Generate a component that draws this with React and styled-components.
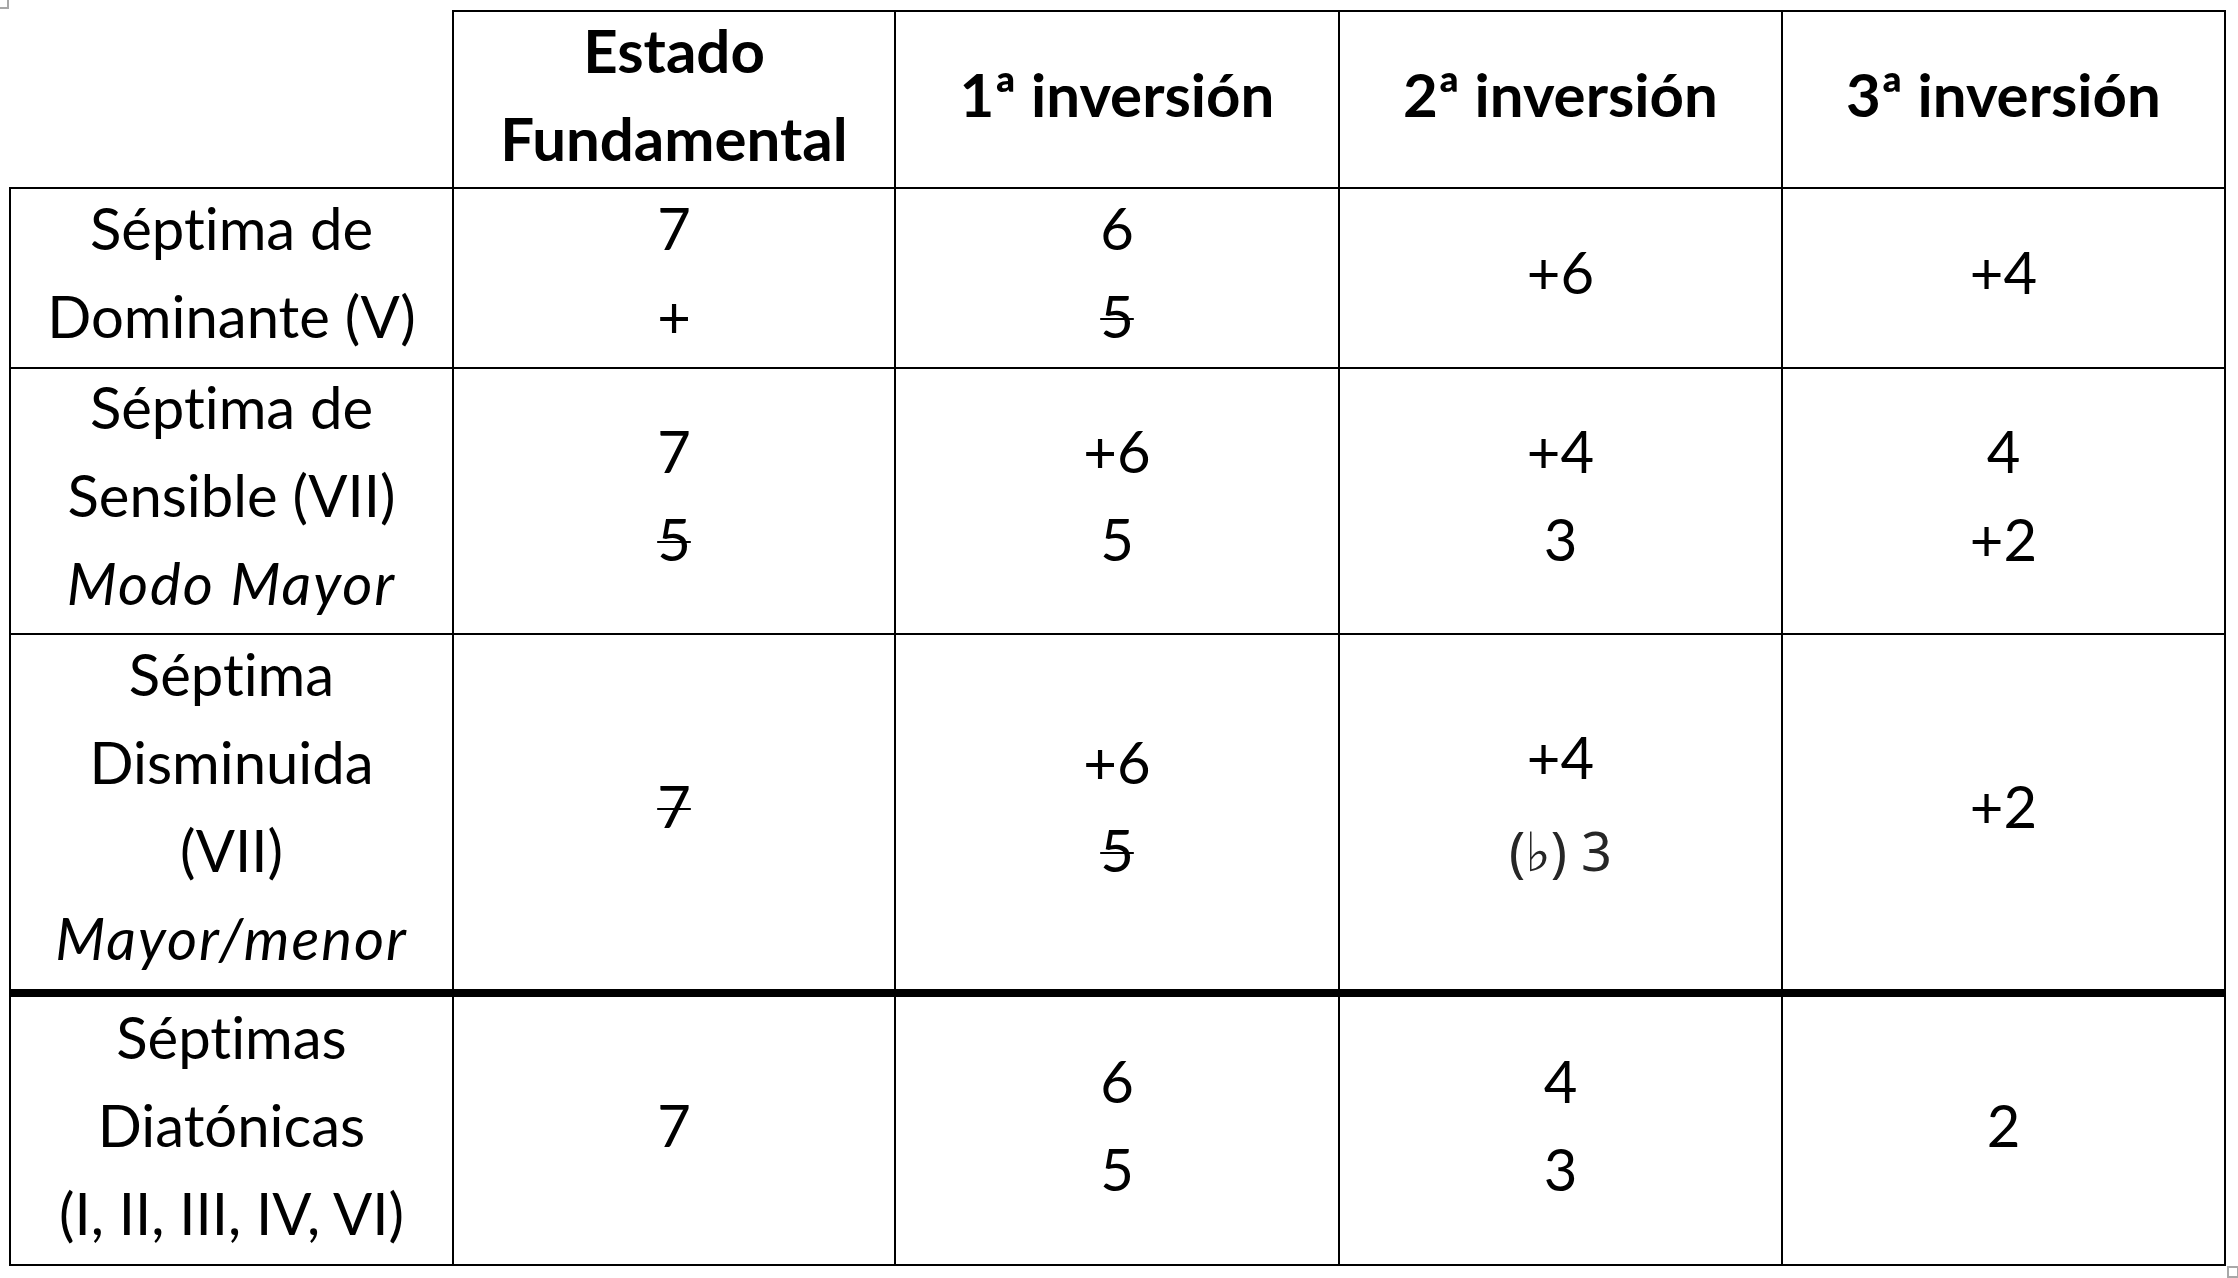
import React from 'react';
import styled, { createGlobalStyle } from 'styled-components';

const Global = createGlobalStyle`
  html, body { margin: 0; padding: 0; background: #ffffff; }
  body { font-family: Lato, "Open Sans", "Liberation Sans", sans-serif; color: #000; }
`;

const Page = styled.div`
  position: relative;
  width: 2238px;
  height: 1278px;
  box-sizing: border-box;
  padding: 10px 0 0 9px;
  overflow: hidden;
`;

const Table = styled.table`
  border-collapse: collapse;
  table-layout: fixed;
  width: 2217px;
  font-size: 58px;
  line-height: 88px;
  font-variant-ligatures: none;
  font-feature-settings: "liga" 0, "clig" 0;
`;

const Row = styled.tr`
  height: ${(p) => p.$h}px;
`;

const Cell = styled.td`
  border: 2px solid #000;
  border-bottom-width: ${(p) => (p.$thick ? 8 : 2)}px;
  padding: 0;
  text-align: center;
  vertical-align: middle;
  font-weight: ${(p) => (p.$head ? 700 : 400)};
  font-size: ${(p) => (p.$head ? 60 : 58)}px;
`;

const Content = styled.div`
  margin-top: -12px;
`;

const Corner = styled.td`
  border-top: none;
  border-left: none;
  padding: 0;
`;

const Line = styled.div`
  display: block;
  white-space: nowrap;
  font-style: ${(p) => (p.$italic ? 'italic' : 'normal')};
  letter-spacing: ${(p) => (p.$italic ? 2 : 0)}px;
`;

const Struck = styled.span`
  text-decoration: line-through;
  text-decoration-thickness: 2px;
`;

const FlatLine = styled.div`
  font-family: "Noto Sans", "DejaVu Sans", sans-serif;
  font-weight: 400;
  color: #262626;
  font-size: 54px;
  line-height: 98px;
  white-space: nowrap;
`;

const Handle = styled.div`
  position: absolute;
  width: 8px;
  height: 8px;
  border: 2px solid #a8a8a8;
  background: #fff;
  left: ${(p) => p.$x}px;
  top: ${(p) => p.$y}px;
`;

const Stack = ({ lines }) => (
  <Content>
    {lines.map((l, i) => (
      <Line key={i} $italic={l.italic}>
        {l.strike ? <Struck>{l.text}</Struck> : l.text}
      </Line>
    ))}
  </Content>
);

const t = (text, extra = {}) => ({ text, ...extra });

const rows = [
  {
    h: 180,
    label: [t('Séptima de'), t('Dominante (V)')],
    cells: [[t('7'), t('+')], [t('6'), t('5', { strike: true })], [t('+6')], [t('+4')]],
  },
  {
    h: 266,
    label: [t('Séptima de'), t('Sensible (VII)'), t('Modo Mayor', { italic: true })],
    cells: [[t('7'), t('5', { strike: true })], [t('+6'), t('5')], [t('+4'), t('3')], [t('4'), t('+2')]],
  },
  {
    h: 359,
    thick: true,
    label: [t('Séptima'), t('Disminuida'), t('(VII)'), t('Mayor/menor', { italic: true })],
    cells: [[t('7', { strike: true })], [t('+6'), t('5', { strike: true })], 'flat', [t('+2')]],
  },
  {
    h: 272,
    label: [t('Séptimas'), t('Diatónicas'), t('(I, II, III, IV, VI)')],
    cells: [[t('7')], [t('6'), t('5')], [t('4'), t('3')], [t('2')]],
  },
];

export default function App() {
  return (
    <>
      <Global />
      <Page>
        <Table>
          <colgroup>
            <col style={{ width: 443 }} />
            <col style={{ width: 442 }} />
            <col style={{ width: 444 }} />
            <col style={{ width: 443 }} />
            <col style={{ width: 443 }} />
          </colgroup>
          <tbody>
            <Row $h={177}>
              <Corner />
              <Cell $head>
                <Stack lines={[t('Estado'), t('Fundamental')]} />
              </Cell>
              <Cell $head>
                <Stack lines={[t('1ª inversión')]} />
              </Cell>
              <Cell $head>
                <Stack lines={[t('2ª inversión')]} />
              </Cell>
              <Cell $head>
                <Stack lines={[t('3ª inversión')]} />
              </Cell>
            </Row>
            {rows.map((r, ri) => (
              <Row key={ri} $h={r.h}>
                <Cell $thick={r.thick}>
                  <Stack lines={r.label} />
                </Cell>
                {r.cells.map((c, ci) =>
                  c === 'flat' ? (
                    <Cell key={ci} $thick={r.thick}>
                      <Content>
                        <Line>+4</Line>
                        <FlatLine>(♭) 3</FlatLine>
                      </Content>
                    </Cell>
                  ) : (
                    <Cell key={ci} $thick={r.thick}>
                      <Stack lines={c} />
                    </Cell>
                  )
                )}
              </Row>
            ))}
          </tbody>
        </Table>
        <Handle $x={-3} $y={-3} />
        <Handle $x={2227} $y={1266} />
      </Page>
    </>
  );
}
